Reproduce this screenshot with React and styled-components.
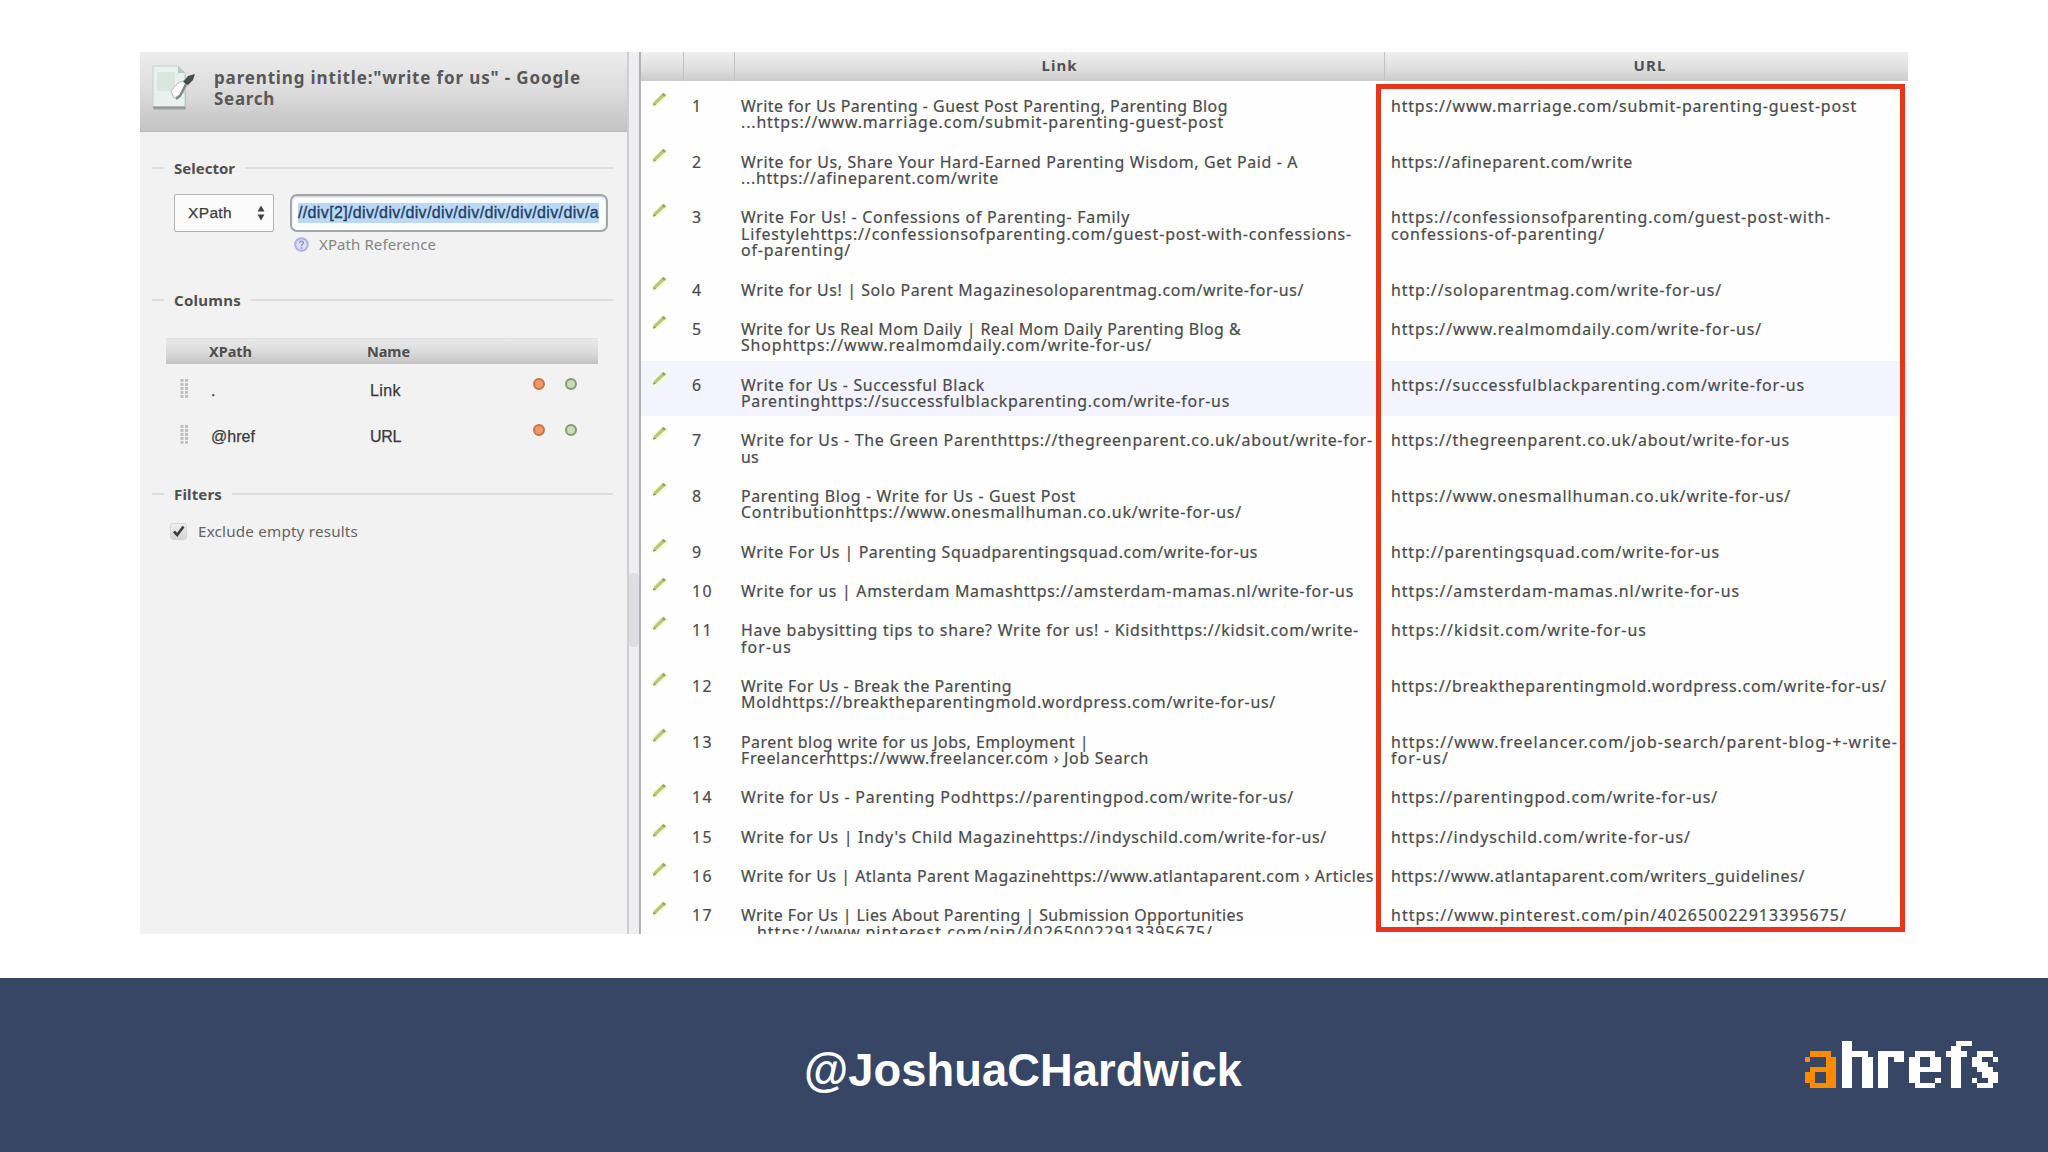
import React, { useLayoutEffect, useRef, useState } from "react";
import styled, { createGlobalStyle, css } from "styled-components";

const Global = createGlobalStyle`
  * { box-sizing: border-box; }
  body { margin: 0; background: #fff; overflow: hidden; }
`;

const ui = `"Noto Sans", "Open Sans", "DejaVu Sans", sans-serif`;
const arial = `"Liberation Sans", Arial, sans-serif`;

const Slide = styled.main`
  width: 2048px;
  height: 1152px;
  display: flex;
  flex-direction: column;
  background: #fff;
  font-family: ${ui};
`;

const Stage = styled.section`
  height: 978px;
  padding: 52px 0 0 140px;
`;

const Window = styled.div`
  position: relative;
  width: 1768px;
  height: 882px;
  display: flex;
  overflow: hidden;
`;

const Sidebar = styled.aside`
  width: 487px;
  background: #f2f2f3;
  display: flex;
  flex-direction: column;
`;

const SidebarHeader = styled.header`
  height: 80px;
  display: flex;
  gap: 17px;
  padding: 12px 0 0 11px;
  background: linear-gradient(#ececec, #dedede 45%, #c3c3c3);
  border-bottom: 1px solid #b9b9b9;
`;

const Title = styled.h1`
  margin: 3px 0 0;
  font: 700 17px/21.3px ${ui};
  color: #585858;
`;

const TextLine = styled.span`
  display: block;
  white-space: pre;
  width: max-content;
`;

/* Tracks a line of text out (or in) until it fills the given width. */
function Fit({ w, children }) {
  const ref = useRef(null);
  const [spacing, setSpacing] = useState(0);
  useLayoutEffect(() => {
    const natural = ref.current.getBoundingClientRect().width;
    setSpacing((w - natural) / children.length);
  }, []);
  return (
    <TextLine ref={ref} style={{ letterSpacing: `${spacing}px` }}>
      {children}
    </TextLine>
  );
}

const Legend = styled.div`
  display: flex;
  align-items: center;
  height: 24px;
  margin: ${(p) => p.$top}px 14px 0 12px;
  font: 700 15px/24px ${ui};
  color: #505050;
  &::before {
    content: "";
    width: 12px;
    height: 2px;
    margin-right: 10px;
    background: #dcdcdc;
  }
  &::after {
    content: "";
    flex: 1;
    height: 2px;
    margin-left: 10px;
    background: #dcdcdc;
  }
`;

const SelectorRow = styled.div`
  display: flex;
  gap: 16px;
  margin: 14px 0 0 34px;
`;

const Select = styled.div`
  width: 100px;
  height: 38px;
  display: flex;
  align-items: center;
  justify-content: space-between;
  padding: 0 8px 0 13px;
  background: #fbfbfb;
  border: 1.5px solid #b2b2b2;
  border-radius: 2px;
  font: 15.5px/20px ${arial};
  color: #3c3c3c;
  -webkit-text-stroke: 0.25px #3c3c3c;
`;

const Input = styled.div`
  width: 318px;
  height: 38px;
  display: flex;
  align-items: center;
  padding-left: 6px;
  background: #fdfeff;
  border: 2px solid #a3a5a8;
  border-radius: 7px;
  box-shadow: inset 0 1px 2px #c8cdd4;
`;

const Selection = styled.span`
  height: 20px;
  background: #bcd8f8;
  font: 16px/20px ${arial};
  color: #22405f;
  -webkit-text-stroke: 0.35px #22405f;
`;

const Reference = styled.a`
  display: flex;
  align-items: center;
  gap: 10px;
  height: 20px;
  margin: 2px 0 0 154px;
  font: 15px/20px ${ui};
  color: #858585;
`;

const columnTracks = css`
  display: grid;
  grid-template-columns: 43px 158px 163px 32px 1fr;
  align-items: center;
`;

const ColumnsHead = styled.div`
  ${columnTracks}
  width: 432px;
  height: 26px;
  margin: 26px 0 0 26px;
  padding-bottom: 2px;
  background: linear-gradient(#e9e9e9, #dadada 55%, #c2c2c2);
  border-top: 1px solid #e0e0e0;
  font: 700 14.5px/20px ${ui};
  color: #4d4d4d;
`;

const ColumnsRow = styled.div`
  ${columnTracks}
  width: 432px;
  height: 46px;
  margin-left: 26px;
  padding-top: 7px;
  font: 16px/20px ${arial};
  color: #3a3a3a;
  -webkit-text-stroke: 0.25px #3a3a3a;
`;

const Cell = styled.span`
  padding-left: ${(p) => p.$pad || 0}px;
`;

const Dot = styled.i`
  width: 12px;
  height: 12px;
  margin: -13px 0 0 3px;
  border-radius: 50%;
  border: 2px solid ${(p) => (p.$remove ? "#c87340" : "#849a70")};
  background: ${(p) => (p.$remove ? "#ee9a66" : "#cbdabb")};
`;

const Option = styled.label`
  display: flex;
  align-items: center;
  gap: 11px;
  height: 22px;
  margin: 14px 0 0 30px;
  font: 15.2px/22px ${ui};
  color: #626262;
`;

const Box = styled.i`
  width: 17px;
  height: 17px;
  display: flex;
  background: linear-gradient(#f0f0f0, #d4d4d4);
  border: 1px solid #d6d6d6;
  border-radius: 3px;
`;

const Splitter = styled.div`
  width: 14px;
  display: flex;
  align-items: flex-start;
  background: #efeff1;
  border-left: 2px solid #cfcfd1;
  border-right: 2px solid #b2b2b5;
`;

const Grabber = styled.i`
  width: 100%;
  height: 74px;
  margin-top: 521px;
  background: #dedee2;
  border-radius: 4px;
`;

const Results = styled.div`
  flex: 1;
  background: #fefefe;
`;

const tracks = css`
  display: grid;
  grid-template-columns: 43px 51px 650px 1fr;
`;

const ResultsHead = styled.div`
  ${tracks}
  height: 29px;
  background: linear-gradient(#efefef, #dedede 60%, #cbcbcb);
`;

const Head = styled.div`
  display: flex;
  justify-content: center;
  padding-left: ${(p) => (p.$last ? 7 : 0)}px;
  border-right: ${(p) => (p.$last ? "none" : "1px solid #c2c2c2")};
  font: 700 15px/26px ${ui};
  color: #505050;
`;

const Rows = styled.div`
  padding-top: 1px;
`;

const Row = styled.div`
  ${tracks}
  padding: 16px 0 6.9px;
  background: ${(p) => (p.$selected ? "#f3f4fd" : "transparent")};
  font: 15.9px/16.4px ${ui};
  color: #4a4a4a;
  -webkit-text-stroke: 0.2px #4a4a4a;
`;

const PencilCell = styled.div`
  height: 16px;
  margin: -6px 0 0 11px;
`;

const Num = styled.div`
  padding-left: 8px;
`;

const LinkCell = styled.div`
  padding-left: 6px;
`;

const UrlCell = styled.div`
  padding-left: 6px;
`;

const Highlight = styled.div`
  position: absolute;
  left: 1236px;
  top: 31.5px;
  width: 529px;
  height: 848px;
  border: 5.5px solid #e8341c;
`;

const Footer = styled.footer`
  flex: 1;
  display: grid;
  grid-template-columns: 1fr 438px 1fr;
  align-items: start;
  background: #374664;
`;

const Author = styled.div`
  grid-column: 2;
  padding-top: 67px;
  margin-left: -1px;
  font: 700 45.3px/52px ${arial};
  color: #fff;
`;

const LogoSlot = styled.div`
  justify-self: end;
  padding: 63px 50px 0 0;
`;

const NoteIcon = () => (
  <svg width="46" height="50" viewBox="0 0 46 50">
    <path d="M3 4h25l7 7v35H3z" fill="#9aa09e" opacity=".55" />
    <path d="M2 2h25l7 7v34H2z" fill="#e9f1ef" stroke="#c3d0cc" />
    <path d="M2 43.5h32" stroke="#8d9391" strokeWidth="2" />
    <path d="M6 8h18v19H6z" fill="#d3e3dc" opacity=".7" />
    <path d="M27 2v7h7z" fill="#b5c8c2" />
    <path d="M20 27l7-8 7-3 3 4-5 9-9 5z" fill="#fbfbfb" stroke="#b5bcba" />
    <path d="M36 18l-7 14-4 3" fill="none" stroke="#7d8382" strokeWidth="2.2" />
    <path d="M32 18l5-6 7-2-2 6-5 5z" fill="#474d4b" />
  </svg>
);

const Arrows = () => (
  <svg width="8" height="16" viewBox="0 0 8 16">
    <path d="M4 .5L7.5 6.5h-7zM4 15.5L7.5 9.5h-7z" fill="#444" />
  </svg>
);

const HelpIcon = () => (
  <svg width="15" height="15" viewBox="0 0 15 15">
    <circle cx="7.5" cy="7.5" r="6.3" fill="#dedef8" stroke="#b0b0e4" strokeWidth="2" />
    <path d="M5.6 6c0-2.6 4-2.4 3.8 0-.1 1.3-1.9 1.3-1.9 3M7.5 10.2v1.5" fill="none" stroke="#8a8acd" strokeWidth="1.3" />
  </svg>
);

const Grip = () => (
  <svg width="9" height="19" viewBox="0 0 9 19">
    {[1, 5, 9, 13, 17].map((y) => (
      <React.Fragment key={y}>
        <rect x="0.5" y={y - 1} width="3" height="2.8" fill="#bdbdbd" />
        <rect x="5" y={y - 1} width="3" height="2.8" fill="#bdbdbd" />
      </React.Fragment>
    ))}
  </svg>
);

const Check = () => (
  <svg width="15" height="15" viewBox="0 0 15 15">
    <path d="M3 7.5l3.2 3.5L12.5 2.5" fill="none" stroke="#3c3c3c" strokeWidth="2.6" />
  </svg>
);

const Pencil = () => (
  <svg width="16" height="15" viewBox="0 0 16 15">
    <path d="M1 13L14 2" stroke="#f7fad6" strokeWidth="7" />
    <path d="M2 10L10.5 1.6l2.8 2.2-8.6 8L1 13.5z" fill="#b9c67c" />
    <path d="M1.5 11l3 1.5-3.5 1.3zM9.8 2.4L11.4 1l2.6 2-1.7 1.8z" fill="#93a06a" />
  </svg>
);

const letters = [
  { x: 0, rows: ["", "", ".####", "#...##", "....##", ".#####", "##..##", "##..##", ".#####"] },
  { x: 7, rows: ["##", "##", "#####", "##..##", "##..##", "##..##", "##..##", "##..##", "##..##"] },
  { x: 14, rows: ["", "", "#####", "##.##", "##", "##", "##", "##", "##"] },
  { x: 20, rows: ["", "", ".####", "##..##", "##..##", "######", "##", "##...#", ".####"] },
  { x: 27, rows: ["..###", ".##", "####", ".##", ".##", ".##", ".##", ".##", ".##"] },
  { x: 32, rows: ["", "", ".###", "##..#", "###", ".###", "..###", "#..##", ".###"] },
];

const Logo = () => (
  <svg width="193" height="47" viewBox="0 0 37 9" preserveAspectRatio="none" shapeRendering="crispEdges" role="img" aria-label="ahrefs">
    {letters.map((l) =>
      l.rows.map((row, y) =>
        [...row].map((c, x) =>
          c === "#" ? (
            <rect key={`${l.x}-${x}-${y}`} x={l.x + x} y={y} width="1" height="1" fill={l.x ? "#fff" : "#ff8c00"} />
          ) : null
        )
      )
    )}
  </svg>
);

/* Each line is [text, width in px]. */
const results = [
  { link: [["Write for Us Parenting - Guest Post Parenting, Parenting Blog", 487], ["...https://www.marriage.com/submit-parenting-guest-post", 483]], url: [["https://www.marriage.com/submit-parenting-guest-post", 466]] },
  { link: [["Write for Us, Share Your Hard-Earned Parenting Wisdom, Get Paid - A", 557], ["...https://afineparent.com/write", 258]], url: [["https://afineparent.com/write", 242]] },
  { link: [["Write For Us! - Confessions of Parenting- Family", 389], ["Lifestylehttps://confessionsofparenting.com/guest-post-with-confessions-", 611], ["of-parenting/", 110]], url: [["https://confessionsofparenting.com/guest-post-with-", 440], ["confessions-of-parenting/", 214]] },
  { link: [["Write for Us! | Solo Parent Magazinesoloparentmag.com/write-for-us/", 563]], url: [["http://soloparentmag.com/write-for-us/", 331]] },
  { link: [["Write for Us Real Mom Daily | Real Mom Daily Parenting Blog &", 500], ["Shophttps://www.realmomdaily.com/write-for-us/", 411]], url: [["https://www.realmomdaily.com/write-for-us/", 371]] },
  { selected: true, link: [["Write for Us - Successful Black", 244], ["Parentinghttps://successfulblackparenting.com/write-for-us", 489]], url: [["https://successfulblackparenting.com/write-for-us", 414]] },
  { link: [["Write for Us - The Green Parenthttps://thegreenparent.co.uk/about/write-for-", 632], ["us", 18]], url: [["https://thegreenparent.co.uk/about/write-for-us", 399]] },
  { link: [["Parenting Blog - Write for Us - Guest Post", 335], ["Contributionhttps://www.onesmallhuman.co.uk/write-for-us/", 501]], url: [["https://www.onesmallhuman.co.uk/write-for-us/", 400]] },
  { link: [["Write For Us | Parenting Squadparentingsquad.com/write-for-us", 517]], url: [["http://parentingsquad.com/write-for-us", 329]] },
  { link: [["Write for us | Amsterdam Mamashttps://amsterdam-mamas.nl/write-for-us", 613]], url: [["https://amsterdam-mamas.nl/write-for-us", 349]] },
  { link: [["Have babysitting tips to share? Write for us! - Kidsithttps://kidsit.com/write-", 618], ["for-us", 51]], url: [["https://kidsit.com/write-for-us", 256]] },
  { link: [["Write For Us - Break the Parenting", 271], ["Moldhttps://breaktheparentingmold.wordpress.com/write-for-us/", 535]], url: [["https://breaktheparentingmold.wordpress.com/write-for-us/", 496]] },
  { link: [["Parent blog write for us Jobs, Employment |", 348], ["Freelancerhttps://www.freelancer.com › Job Search", 408]], url: [["https://www.freelancer.com/job-search/parent-blog-+-write-", 507], ["for-us/", 58]] },
  { link: [["Write for Us - Parenting Podhttps://parentingpod.com/write-for-us/", 553]], url: [["https://parentingpod.com/write-for-us/", 327]] },
  { link: [["Write for Us | Indy's Child Magazinehttps://indyschild.com/write-for-us/", 586]], url: [["https://indyschild.com/write-for-us/", 300]] },
  { link: [["Write for Us | Atlanta Parent Magazinehttps://www.atlantaparent.com › Articles", 633]], url: [["https://www.atlantaparent.com/writers_guidelines/", 414]] },
  { link: [["Write For Us | Lies About Parenting | Submission Opportunities", 503], ["...https://www.pinterest.com/pin/402650022913395675/", 472]], url: [["https://www.pinterest.com/pin/402650022913395675/", 456]] },
];

const Lines = ({ of }) => of.map(([text, w]) => <Fit key={text} w={w}>{text}</Fit>);

const ColumnEntry = ({ xpath, name }) => (
  <ColumnsRow>
    <Cell $pad={14}><Grip /></Cell>
    <Cell $pad={2}>{xpath}</Cell>
    <Cell $pad={3}><Fit w={31}>{name}</Fit></Cell>
    <Dot $remove />
    <Dot />
  </ColumnsRow>
);

export default function App() {
  return (
    <Slide>
      <Global />
      <Stage>
        <Window>
          <Sidebar>
            <SidebarHeader>
              <NoteIcon />
              <Title>
                <Fit w={367}>{'parenting intitle:"write for us" - Google'}</Fit>
                <Fit w={61}>Search</Fit>
              </Title>
            </SidebarHeader>
            <Legend $top={24}><Fit w={61}>Selector</Fit></Legend>
            <SelectorRow>
              <Select><Fit w={44}>XPath</Fit><Arrows /></Select>
              <Input>
                <Selection><Fit w={301}>//div[2]/div/div/div/div/div/div/div/div/div/a</Fit></Selection>
              </Input>
            </SelectorRow>
            <Reference><HelpIcon /><Fit w={117}>XPath Reference</Fit></Reference>
            <Legend $top={34}><Fit w={67}>Columns</Fit></Legend>
            <ColumnsHead>
              <span />
              <Cell><Fit w={43}>XPath</Fit></Cell>
              <Cell><Fit w={43}>Name</Fit></Cell>
            </ColumnsHead>
            <ColumnEntry xpath="." name="Link" />
            <ColumnEntry xpath={<Fit w={44}>@href</Fit>} name="URL" />
            <Legend $top={26}><Fit w={48}>Filters</Fit></Legend>
            <Option><Box><Check /></Box><Fit w={160}>Exclude empty results</Fit></Option>
          </Sidebar>
          <Splitter><Grabber /></Splitter>
          <Results>
            <ResultsHead>
              <Head />
              <Head />
              <Head><Fit w={36}>Link</Fit></Head>
              <Head $last><Fit w={33}>URL</Fit></Head>
            </ResultsHead>
            <Rows>
              {results.map((r, i) => (
                <Row key={i} $selected={r.selected}>
                  <PencilCell><Pencil /></PencilCell>
                  <Num><Fit w={i < 9 ? 10 : 21}>{String(i + 1)}</Fit></Num>
                  <LinkCell><Lines of={r.link} /></LinkCell>
                  <UrlCell><Lines of={r.url} /></UrlCell>
                </Row>
              ))}
            </Rows>
          </Results>
          <Highlight />
        </Window>
      </Stage>
      <Footer>
        <Author><Fit w={438}>@JoshuaCHardwick</Fit></Author>
        <LogoSlot><Logo /></LogoSlot>
      </Footer>
    </Slide>
  );
}
